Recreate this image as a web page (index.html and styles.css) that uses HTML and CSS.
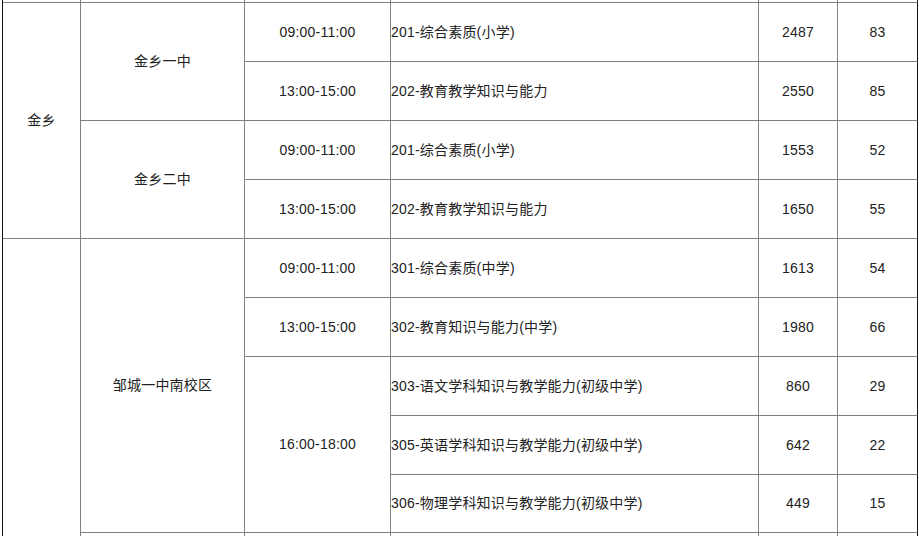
FILE: index.html
```html
<!DOCTYPE html>
<html lang="zh-CN">
<head>
<meta charset="utf-8">
<title>考点安排</title>
<link rel="stylesheet" href="styles.css">
</head>
<body>
<table class="grid">
  <colgroup>
    <col class="w1"><col class="w2"><col class="w3"><col class="w4"><col class="w5"><col class="w6">
  </colgroup>
  <tr class="stub"><td></td><td></td><td></td><td></td><td></td><td></td></tr>
  <tr>
    <td rowspan="4">金乡</td>
    <td rowspan="2">金乡一中</td>
    <td>09:00-11:00</td>
    <td class="subj">201-综合素质(小学)</td>
    <td>2487</td>
    <td>83</td>
  </tr>
  <tr>
    <td>13:00-15:00</td>
    <td class="subj">202-教育教学知识与能力</td>
    <td>2550</td>
    <td>85</td>
  </tr>
  <tr>
    <td rowspan="2">金乡二中</td>
    <td>09:00-11:00</td>
    <td class="subj">201-综合素质(小学)</td>
    <td>1553</td>
    <td>52</td>
  </tr>
  <tr>
    <td>13:00-15:00</td>
    <td class="subj">202-教育教学知识与能力</td>
    <td>1650</td>
    <td>55</td>
  </tr>
  <tr>
    <td rowspan="6"></td>
    <td rowspan="5">邹城一中南校区</td>
    <td>09:00-11:00</td>
    <td class="subj">301-综合素质(中学)</td>
    <td>1613</td>
    <td>54</td>
  </tr>
  <tr>
    <td>13:00-15:00</td>
    <td class="subj">302-教育知识与能力(中学)</td>
    <td>1980</td>
    <td>66</td>
  </tr>
  <tr>
    <td rowspan="3">16:00-18:00</td>
    <td class="subj">303-语文学科知识与教学能力(初级中学)</td>
    <td>860</td>
    <td>29</td>
  </tr>
  <tr>
    <td class="subj">305-英语学科知识与教学能力(初级中学)</td>
    <td>642</td>
    <td>22</td>
  </tr>
  <tr class="short">
    <td class="subj">306-物理学科知识与教学能力(初级中学)</td>
    <td>449</td>
    <td>15</td>
  </tr>
  <tr>
    <td></td>
    <td></td>
    <td class="subj"></td>
    <td></td>
    <td></td>
  </tr>
</table>
</body>
</html>
```

FILE: styles.css
```css
html, body {
  margin: 0;
  padding: 0;
  background: #ffffff;
}

.grid {
  margin-left: 2px;
  width: 916px;
  table-layout: fixed;
  border-collapse: separate;
  border-spacing: 0;
  border-left: 1px solid #111111;
  font-family: "Liberation Sans", "Noto Sans CJK SC", sans-serif;
  font-size: 14px;
  line-height: 16px;
  letter-spacing: 0.2px;
  color: #222222;
}

.w1 { width: 78px; }
.w2 { width: 164px; }
.w3 { width: 146px; }
.w4 { width: 368px; }
.w5 { width: 79px; }
.w6 { width: 80px; }

.grid td {
  padding: 0 0 1px 0;
  height: 57px;
  border-right: 1px solid #808080;
  border-bottom: 1px solid #808080;
  text-align: center;
  vertical-align: middle;
  white-space: nowrap;
}

.grid td:last-child {
  border-right-color: #111111;
}

.grid .stub td {
  height: 2px;
  padding: 0;
  font-size: 0;
  line-height: 0;
}

.grid .short td {
  height: 56px;
}

.grid td.subj {
  text-align: left;
}
```
